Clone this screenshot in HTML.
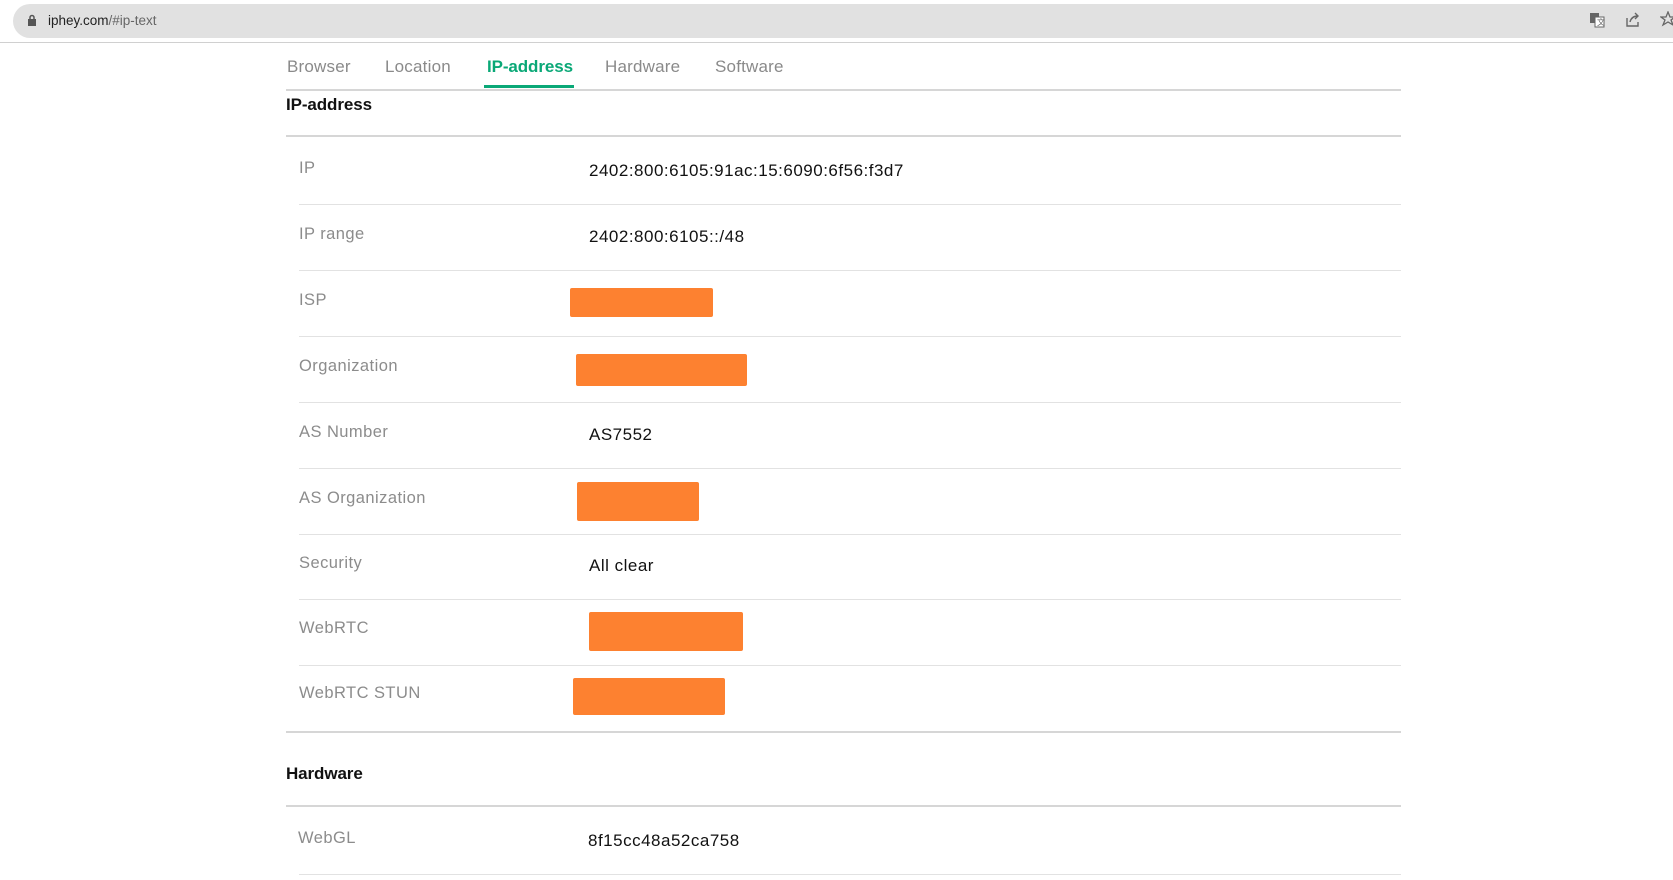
<!DOCTYPE html>
<html><head><meta charset="utf-8"><style>
body{margin:0;width:1673px;height:880px;overflow:hidden;background:#fff;font-family:"Liberation Sans",Arial,sans-serif;position:relative}
.a{position:absolute;white-space:nowrap}
.bar{position:absolute;left:13px;top:4px;width:1700px;height:34px;background:#e1e1e1;border-radius:17px}
.tl{position:absolute;left:0;top:42px;width:1673px;height:1px;background:#d0d0d0}
.tab{position:absolute;top:57px;font-size:17px;color:#8a8a8a;letter-spacing:0.2px}
.line{position:absolute;height:1px;background:#e2e2e2}
.lbl{position:absolute;left:299px;font-size:16.5px;color:#8c8c8c;letter-spacing:0.45px}
.val{position:absolute;left:589px;font-size:17px;color:#111;letter-spacing:0.5px}
.h{position:absolute;left:286px;font-size:17px;font-weight:bold;color:#111;letter-spacing:-0.1px}
.red{position:absolute;background:#fd8130;border-radius:2px}
</style></head><body>
<div class="bar"></div>
<svg class="a" style="left:27px;top:14px" width="10" height="13"><rect x="1" y="5" width="8" height="7" fill="#555"/><path d="M3 5V3.5a2 2 0 0 1 4 0V5" stroke="#555" stroke-width="1.5" fill="none"/></svg>
<div class="a" style="left:48px;top:13px;font-size:13.5px;color:#222">iphey.com<span style="color:#666">/#ip-text</span></div>
<svg class="a" style="left:1589px;top:12px" width="16" height="16"><rect x="1" y="1" width="9" height="10" fill="#666"/><rect x="6" y="5" width="9" height="10" fill="#fff" stroke="#666"/><text x="8" y="13" font-size="8" fill="#666">文</text></svg>
<svg class="a" style="left:1625px;top:12px" width="16" height="16"><path d="M2 6v8h11v-4M5 10c1-4 4-6 8-6M10 1l3 3-3 3" stroke="#666" stroke-width="1.4" fill="none"/></svg>
<svg class="a" style="left:1660px;top:11px" width="16" height="16"><path d="M8 1l2 5h5l-4 3 2 5-5-3-5 3 2-5-4-3h5z" stroke="#666" stroke-width="1.3" fill="none"/></svg>
<div class="tl"></div>
<div class="tab" style="left:287px">Browser</div>
<div class="tab" style="left:385px">Location</div>
<div class="tab" style="left:487px;color:#0aa877;font-weight:bold;letter-spacing:-0.1px">IP-address</div>
<div class="tab" style="left:605px">Hardware</div>
<div class="tab" style="left:715px">Software</div>
<div class="a" style="left:484px;top:85px;width:90px;height:3px;background:#0aa877"></div>
<div class="line" style="left:286px;top:89px;width:1115px;background:#d6d6d6;height:2px"></div>
<div class="h" style="top:95px">IP-address</div>
<div class="line" style="left:286px;top:135px;width:1115px;background:#d6d6d6;height:2px"></div>

<div class="lbl" style="top:159px">IP</div><div class="val" style="top:161px">2402:800:6105:91ac:15:6090:6f56:f3d7</div>
<div class="line" style="left:299px;top:204px;width:1102px"></div>
<div class="lbl" style="top:225px">IP range</div><div class="val" style="top:227px">2402:800:6105::/48</div>
<div class="line" style="left:299px;top:270px;width:1102px"></div>
<div class="lbl" style="top:291px">ISP</div>
<div class="red" style="left:570px;top:288px;width:143px;height:29px"></div>
<div class="line" style="left:299px;top:336px;width:1102px"></div>
<div class="lbl" style="top:357px">Organization</div>
<div class="red" style="left:576px;top:354px;width:171px;height:32px"></div>
<div class="line" style="left:299px;top:402px;width:1102px"></div>
<div class="lbl" style="top:423px">AS Number</div><div class="val" style="top:425px">AS7552</div>
<div class="line" style="left:299px;top:468px;width:1102px"></div>
<div class="lbl" style="top:489px">AS Organization</div>
<div class="red" style="left:577px;top:482px;width:122px;height:39px"></div>
<div class="line" style="left:299px;top:534px;width:1102px"></div>
<div class="lbl" style="top:554px">Security</div><div class="val" style="top:556px">All clear</div>
<div class="line" style="left:299px;top:599px;width:1102px"></div>
<div class="lbl" style="top:619px">WebRTC</div>
<div class="red" style="left:589px;top:612px;width:154px;height:39px"></div>
<div class="line" style="left:299px;top:665px;width:1102px"></div>
<div class="lbl" style="top:684px">WebRTC STUN</div>
<div class="red" style="left:573px;top:678px;width:152px;height:37px"></div>
<div class="line" style="left:286px;top:731px;width:1115px;background:#d6d6d6;height:2px"></div>
<div class="h" style="top:764px">Hardware</div>
<div class="line" style="left:286px;top:805px;width:1115px;background:#d6d6d6;height:2px"></div>
<div class="lbl" style="left:298px;top:829px">WebGL</div><div class="val" style="left:588px;top:831px">8f15cc48a52ca758</div>
<div class="line" style="left:299px;top:874px;width:1102px"></div>
</body></html>
